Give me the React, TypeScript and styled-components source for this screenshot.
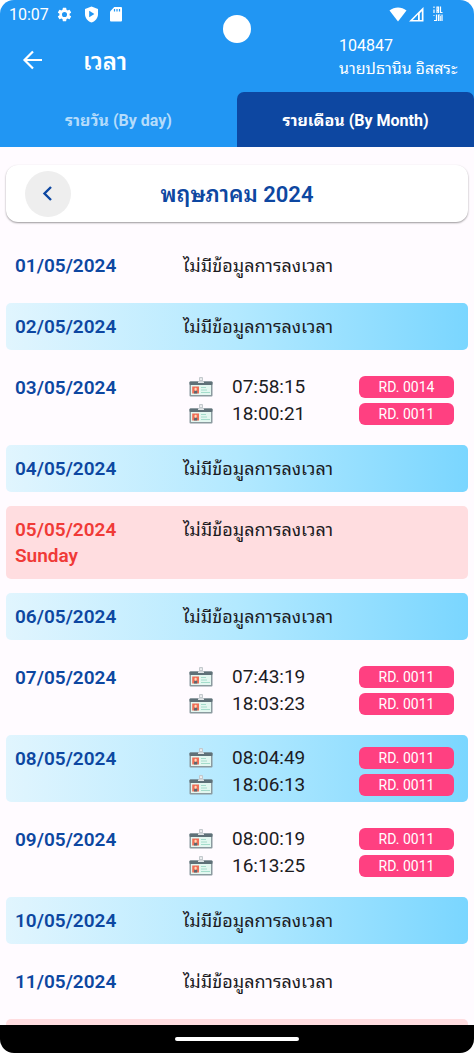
import React from "react";
import styled, { createGlobalStyle } from "styled-components";

const GlobalStyle = createGlobalStyle`
  * { box-sizing: border-box; }
  body {
    margin: 0;
    background: #ffffff;
    font-family: Roboto, "Noto Sans Thai Looped", "Noto Looped Thai", Loma, Garuda, Waree, "Noto Sans Thai", "Noto Sans", sans-serif;
  }
  button { font: inherit; border: 0; padding: 0; cursor: pointer; }
`;

const Screen = styled.div`
  display: flex;
  flex-direction: column;
  height: 100vh;
  background: #fffbff;
`;

const Header = styled.header`
  position: relative;
  background: #2196f3;
  border-radius: 14px 14px 0 0;
`;

const Corners = styled.div`
  background: #ffffff;
`;

const StatusBar = styled.div`
  display: flex;
  align-items: center;
  justify-content: space-between;
  height: 28px;
  padding: 0 31px 0 9px;
  color: #ffffff;
  font-size: 16px;
  line-height: 20px;
`;

const StatusGroup = styled.div<{ $gap: number }>`
  display: flex;
  align-items: center;
  gap: ${(p) => p.$gap}px;
`;

const StatusIcons = styled(StatusGroup)`
  margin-left: 7px;
`;

const Clock = styled.span`
  padding-top: 2px;
`;

const Camera = styled.span`
  position: absolute;
  top: 15px;
  left: 50%;
  width: 28px;
  height: 28px;
  margin-left: -14px;
  border-radius: 50%;
  background: #ffffff;
`;

const AppBar = styled.div`
  display: flex;
  align-items: center;
  height: 64px;
  padding: 0 13px 0 20px;
  color: #ffffff;
`;

const BackButton = styled.button`
  display: flex;
  width: 24px;
  height: 24px;
  color: #ffffff;
  background: transparent;
`;

const Title = styled.h1`
  flex: 1;
  margin: 4px 0 0 39px;
  font-size: 24px;
  line-height: 30px;
  font-weight: 600;
`;

const User = styled.div`
  width: 122px;
  padding-bottom: 6px;
  font-size: 16px;
  line-height: 23px;
  white-space: nowrap;
`;

const Tabs = styled.nav`
  display: flex;
`;

const Tab = styled.button<{ $active?: boolean }>`
  flex: 1;
  height: 55px;
  padding-top: 2px;
  border-radius: 7px 7px 0 0;
  background: ${(p) => (p.$active ? "#0d47a1" : "transparent")};
  color: ${(p) => (p.$active ? "#ffffff" : "#b5dcfb")};
  font-size: 16px;
  line-height: 24px;
  font-weight: 700;
`;

const Main = styled.main`
  flex: 1;
  min-height: 0;
  overflow: hidden;
  padding: 18px 6px 0;
`;

const MonthCard = styled.section`
  display: grid;
  grid-template-columns: 46px 1fr 46px;
  align-items: center;
  height: 57px;
  padding: 0 19px;
  border-radius: 12px;
  background: #ffffff;
  box-shadow: 0 1px 2px rgba(0, 0, 0, 0.4);
`;

const RoundButton = styled.button`
  display: flex;
  align-items: center;
  justify-content: center;
  width: 46px;
  height: 46px;
  border-radius: 50%;
  background: #eeeeee;
  color: #0d47a1;
`;

const Month = styled.h2`
  margin: 0;
  padding-top: 2px;
  text-align: center;
  color: #0d47a1;
  font-size: 22px;
  line-height: 30px;
  font-weight: 600;
`;

const Days = styled.ul`
  display: flex;
  flex-direction: column;
  gap: 14px;
  margin: 20px 0 0;
  padding: 0;
  list-style: none;
`;

type Tone = "plain" | "blue" | "red";

const toneBackground: Record<Tone, string> = {
  plain: "transparent",
  blue: "linear-gradient(90deg, #e1f5fe, #b3e9ff 50%, #7ad6ff)",
  red: "#ffdde0",
};

const Day = styled.li<{ $tone: Tone }>`
  display: grid;
  grid-template-columns: 168px 1fr;
  padding: 11px 9px 6px;
  border-radius: 5px;
  background: ${(p) => toneBackground[p.$tone]};
`;

const DateLabel = styled.div<{ $tone: Tone }>`
  padding-bottom: 4px;
  color: ${(p) => (p.$tone === "red" ? "#f03a37" : "#0d47a1")};
  font-size: 19px;
  line-height: 26px;
  font-weight: 600;
`;

const Empty = styled.div`
  color: #1c1b1f;
  font-size: 18px;
  line-height: 26px;
  white-space: nowrap;
`;

const Punches = styled.div`
  display: flex;
  flex-direction: column;
  gap: 5px;
  padding: 1px 5px 0 6px;
`;

const Punch = styled.div`
  display: flex;
  align-items: center;
  height: 22px;
`;

const Time = styled.time`
  flex: 1;
  margin-left: 19px;
  color: #1c1b1f;
  font-size: 19px;
  line-height: 22px;
`;

const Badge = styled.span`
  width: 95px;
  border-radius: 6px;
  background: #ff4081;
  color: #ffffff;
  text-align: center;
  font-size: 14px;
  line-height: 22px;
`;

const NavBar = styled.footer`
  display: flex;
  justify-content: center;
  height: 28px;
  padding-top: 12px;
  border-radius: 0 0 14px 14px;
  background: #000000;
`;

const Handle = styled.span`
  width: 124px;
  height: 4px;
  border-radius: 2px;
  background: #ffffff;
`;

const GearIcon = () => (
  <svg width="17" height="17" viewBox="0 0 24 24" fill="currentColor" aria-hidden="true">
    <path d="M19.14 12.94c.04-.3.06-.61.06-.94s-.02-.64-.07-.94l2.03-1.58a.49.49 0 0 0 .12-.61l-1.92-3.32a.49.49 0 0 0-.59-.22l-2.39.96a7 7 0 0 0-1.62-.94l-.36-2.54a.48.48 0 0 0-.48-.41h-3.84a.48.48 0 0 0-.47.41l-.36 2.54c-.59.24-1.13.57-1.62.94l-2.39-.96a.48.48 0 0 0-.59.22L2.74 8.87a.48.48 0 0 0 .12.61l2.03 1.58c-.05.3-.09.63-.09.94s.02.64.07.94l-2.03 1.58a.49.49 0 0 0-.12.61l1.92 3.32c.12.22.37.29.59.22l2.39-.96c.5.38 1.03.7 1.62.94l.36 2.54c.05.24.24.41.48.41h3.84c.24 0 .44-.17.47-.41l.36-2.54a7 7 0 0 0 1.62-.94l2.39.96c.22.08.47 0 .59-.22l1.92-3.32a.48.48 0 0 0-.12-.61zM12 15.6a3.6 3.6 0 1 1 0-7.2 3.6 3.6 0 0 1 0 7.2z" />
  </svg>
);

const ShieldIcon = () => (
  <svg width="15" height="17" viewBox="0 0 15 17" aria-hidden="true">
    <path d="M7.5 0.5L14 3v5c0 4-2.5 7.2-6.5 8.5C3.5 15.2 1 12 1 8V3z" fill="#ffffff" />
    <path d="M5.2 4.8v6.4l5.2-3.2z" fill="#2196f3" />
  </svg>
);

const SdCardIcon = () => (
  <svg width="12" height="15" viewBox="0 0 12 15" aria-hidden="true">
    <path d="M4.3 0H11a1 1 0 0 1 1 1v12.5a1 1 0 0 1-1 1H1a1 1 0 0 1-1-1V4.5z" fill="#ffffff" />
    <path d="M4.5 2v2.6M7 2v2.6M9.5 2v2.6" stroke="#2196f3" strokeWidth="1.2" />
  </svg>
);

const WifiIcon = () => (
  <svg width="18" height="15" viewBox="0 0 18 15" aria-hidden="true">
    <path d="M0.5 3.5C5.5-.6 12.5-.6 17.5 3.5L9 14.5z" fill="#ffffff" />
  </svg>
);

const SignalIcon = () => (
  <svg width="15" height="15" viewBox="0 0 15 15" aria-hidden="true">
    <path d="M14.5 0v14.5H0z" fill="#ffffff" />
    <path d="M9 7.5v5.5H3.8z M12.8 4.2V13h-2V6.2z" fill="#2196f3" />
  </svg>
);

const NetworkIcon = () => (
  <svg width="10" height="16" viewBox="0 0 10 16" fill="none" stroke="#ffffff" aria-hidden="true">
    <path d="M1 .5v1.5M1 3.500v3.500M4 7V1h1.500v6M4 4.500h1.500M7.500 .5v6H9.500M.5 9.500h1M3.500 8.500v6H1M5.500 8.500V15M9 8.500V15M7.200 10v5M5.500 9h2" strokeWidth="1.200" />
  </svg>
);

const ArrowLeftIcon = () => (
  <svg width="24" height="24" viewBox="0 0 24 24" fill="none" stroke="currentColor" strokeWidth="2.2" aria-hidden="true">
    <path d="M22 12H4.5M13 3.5L4.5 12l8.5 8.5" />
  </svg>
);

const ChevronLeftIcon = () => (
  <svg width="24" height="24" viewBox="0 0 24 24" fill="none" stroke="currentColor" strokeWidth="2.4" aria-hidden="true">
    <path d="M15 5L8.500 11.5l6.500 6.5" />
  </svg>
);

const IdCardIcon = () => (
  <svg width="24" height="20" viewBox="0 0 24 20" aria-hidden="true">
    <rect x="0.5" y="4.5" width="23" height="15" rx="1" fill="#8b9a9f" />
    <rect x="0.5" y="4.5" width="23" height="3.5" rx="1" fill="#5f7178" />
    <rect x="2" y="8" width="20" height="10" fill="#e3f7f0" />
    <rect x="3.2" y="9.5" width="6.8" height="7" fill="#ef6f58" />
    <path d="M5 16.500v-2l.8-1h1.600l.8 1v2z" fill="#5b6870" />
    <rect x="5.5" y="10.8" width="2.2" height="3" rx="1" fill="#ffd9b8" />
    <path d="M12 10.5h5M12 13h6M12 15.500h9" stroke="#a4dccb" strokeWidth="1" />
    <rect x="10" y="0" width="4" height="6" rx="1" fill="#c3c9cd" />
    <rect x="11.2" y="1.3" width="1.6" height="1.6" fill="#ffffff" />
    <rect x="9" y="4.5" width="6" height="1.5" fill="#dfe4e6" />
  </svg>
);

interface DayRecord {
  date: string;
  tone: Tone;
  weekday?: string;
  punches?: [string, string][];
}

const days: DayRecord[] = [
  { date: "01/05/2024", tone: "plain" },
  { date: "02/05/2024", tone: "blue" },
  { date: "03/05/2024", tone: "plain", punches: [["07:58:15", "RD. 0014"], ["18:00:21", "RD. 0011"]] },
  { date: "04/05/2024", tone: "blue" },
  { date: "05/05/2024", tone: "red", weekday: "Sunday" },
  { date: "06/05/2024", tone: "blue" },
  { date: "07/05/2024", tone: "plain", punches: [["07:43:19", "RD. 0011"], ["18:03:23", "RD. 0011"]] },
  { date: "08/05/2024", tone: "blue", punches: [["08:04:49", "RD. 0011"], ["18:06:13", "RD. 0011"]] },
  { date: "09/05/2024", tone: "plain", punches: [["08:00:19", "RD. 0011"], ["16:13:25", "RD. 0011"]] },
  { date: "10/05/2024", tone: "blue" },
  { date: "11/05/2024", tone: "plain" },
];

export default function App() {
  return (
    <>
      <GlobalStyle />
      <Screen>
        <Corners>
          <Header>
            <StatusBar>
              <StatusGroup $gap={0}>
                <Clock>10:07</Clock>
                <StatusIcons $gap={11}>
                  <GearIcon />
                  <ShieldIcon />
                  <SdCardIcon />
                </StatusIcons>
              </StatusGroup>
              <StatusGroup $gap={2}>
                <WifiIcon />
                <SignalIcon />
                <StatusIcons $gap={0}>
                  <NetworkIcon />
                </StatusIcons>
              </StatusGroup>
            </StatusBar>
            <Camera />
            <AppBar>
              <BackButton aria-label="Back">
                <ArrowLeftIcon />
              </BackButton>
              <Title>เวลา</Title>
              <User>
                <div>104847</div>
                <div>นายปธานิน อิสสระ</div>
              </User>
            </AppBar>
            <Tabs>
              <Tab>รายวัน (By day)</Tab>
              <Tab $active>รายเดือน (By Month)</Tab>
            </Tabs>
          </Header>
        </Corners>
        <Main>
          <MonthCard>
            <RoundButton aria-label="Previous month">
              <ChevronLeftIcon />
            </RoundButton>
            <Month>พฤษภาคม 2024</Month>
          </MonthCard>
          <Days>
            {days.map((day) => (
              <Day key={day.date} $tone={day.tone}>
                <DateLabel $tone={day.tone}>
                  <div>{day.date}</div>
                  {day.weekday && <div>{day.weekday}</div>}
                </DateLabel>
                {day.punches ? (
                  <Punches>
                    {day.punches.map(([time, reader]) => (
                      <Punch key={time}>
                        <IdCardIcon />
                        <Time>{time}</Time>
                        <Badge>{reader}</Badge>
                      </Punch>
                    ))}
                  </Punches>
                ) : (
                  <Empty>ไม่มีข้อมูลการลงเวลา</Empty>
                )}
              </Day>
            ))}
            <Day $tone="red">
              <DateLabel $tone="red" />
            </Day>
          </Days>
        </Main>
        <Corners>
          <NavBar>
            <Handle />
          </NavBar>
        </Corners>
      </Screen>
    </>
  );
}
